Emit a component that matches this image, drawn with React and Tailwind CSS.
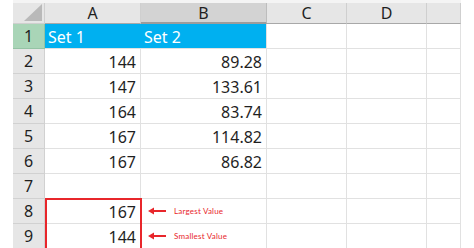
import React from "react";

const cols = ["A", "B", "C", "D", ""];
const rows = [
  ["Set 1", "Set 2"],
  ["144", "89.28"],
  ["147", "133.61"],
  ["164", "83.74"],
  ["167", "114.82"],
  ["167", "86.82"],
  ["", ""],
  ["167", "largest"],
  ["144", "smallest"],
];

function Arrow() {
  return (
    <svg width="18" height="8" viewBox="0 0 18 8" className="shrink-0">
      <path d="M0 4 L6 0.5 L6 7.5 Z" fill="#e8262b" />
      <rect x="5" y="3" width="13" height="2" fill="#e8262b" />
    </svg>
  );
}

function Note({ text }) {
  return (
    <div className="flex items-center h-full pl-[7px] gap-[8px]">
      <Arrow />
      <span className="text-[8px] text-[#e8262b] tracking-[0.2px]" style={{ fontFamily: "Lato, sans-serif" }}>
        {text}
      </span>
    </div>
  );
}

export default function App() {
  const cell = "border-r border-b border-[#e1e1e1] h-[25px]";
  return (
    <div
      className="w-[474px] h-[248px] bg-white overflow-hidden pl-[13px]"
      style={{ fontFamily: "'Noto Sans', sans-serif" }}
    >
      <div className="relative grid grid-cols-[32px_96px_126px_80px_80px_34px] text-[#1f1f1f]">
        {/* top strip */}
        <div className="col-span-6 h-[3px] bg-[#f4f4f4]" />
        {/* header row */}
        <div className="h-[21px] bg-[#e6e6e6] border-r border-b border-[#cfcfcf] flex items-end justify-end pr-[2px] pb-[2px]">
          <svg width="18" height="17" viewBox="0 0 18 17">
            <path d="M18 0 L18 17 L0 17 Z" fill="#b9b9b9" />
          </svg>
        </div>
        {cols.map((c, i) => (
          <div
            key={i}
            className={
              "h-[21px] flex items-center justify-center text-[16px] border-r " +
              (c === "B"
                ? "bg-[#d3d3d3] border-[#bdbdbd] border-b-2 border-b-[#9c9c9c]"
                : "bg-[#e6e6e6] border-[#cfcfcf] border-b border-b-[#a8a8a8]")
            }
          >
            {c}
          </div>
        ))}

        {rows.map((r, i) => {
          const n = i + 1;
          return (
            <React.Fragment key={n}>
              <div
                className={
                  "h-[25px] flex items-center justify-center text-[16px] border-r border-b " +
                  (n === 1 ? "bg-[#a9d5b7] border-[#94c3a4]" : "bg-[#e6e6e6] border-[#d1d1d1]")
                }
              >
                {n}
              </div>
              {n === 1 ? (
                <>
                  <div className="h-[25px] bg-[#00b0f0] text-white text-[16px] flex items-end pl-[3px] leading-[22px] border-b border-[#e1e1e1]">
                    {r[0]}
                  </div>
                  <div className="h-[25px] bg-[#00b0f0] text-white text-[16px] flex items-end pl-[3px] leading-[22px] border-r border-b border-[#e1e1e1]">
                    {r[1]}
                  </div>
                </>
              ) : (
                <>
                  <div className={cell + " flex items-end justify-end pr-[4px] text-[16px] leading-[22px]"}>{r[0]}</div>
                  {r[1] === "largest" ? (
                    <div className={cell}>
                      <Note text="Largest Value" />
                    </div>
                  ) : r[1] === "smallest" ? (
                    <div className={cell}>
                      <Note text="Smallest Value" />
                    </div>
                  ) : (
                    <div className={cell + " flex items-end justify-end pr-[4px] text-[16px] leading-[22px]"}>{r[1]}</div>
                  )}
                </>
              )}
              <div className={cell} />
              <div className={cell} />
              <div className={cell} />
            </React.Fragment>
          );
        })}

        {/* selection box around A8:A9 */}
        <div className="absolute left-[32px] top-[198px] w-[97px] h-[52px] border-2 border-[#e8262b] pointer-events-none" />
      </div>
    </div>
  );
}
